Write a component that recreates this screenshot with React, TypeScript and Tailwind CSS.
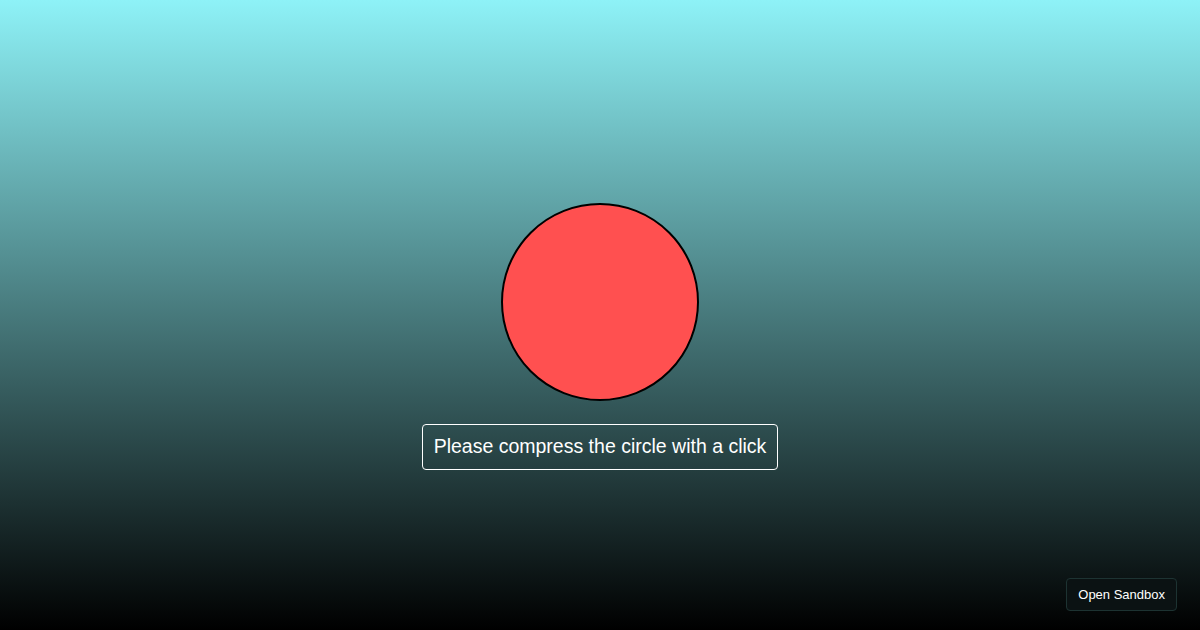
import React from 'react';

const App: React.FC = () => {
  return (
    <div
      className="relative w-full h-[630px] overflow-hidden bg-[linear-gradient(to_bottom,#8ef2f7,#000000)]"
      style={{ fontFamily: '"Liberation Sans", Arial, sans-serif' }}
    >
      <div className="flex flex-col items-center pt-[203px]">
        <div className="w-[198px] h-[198px] rounded-full bg-[#ff5050] border-2 border-black" />
        <div className="mt-[23px] h-[46px] px-[11px] flex items-center rounded-[4px] border border-white text-white text-[19.5px]">
          Please compress the circle with a click
        </div>
      </div>

      <button className="absolute right-[23px] bottom-[19px] h-[33px] px-[11px] rounded-[4px] bg-[#0b1213] border border-[#1d3332] text-[13px] text-white">
        Open Sandbox
      </button>
    </div>
  );
};

export default App;
